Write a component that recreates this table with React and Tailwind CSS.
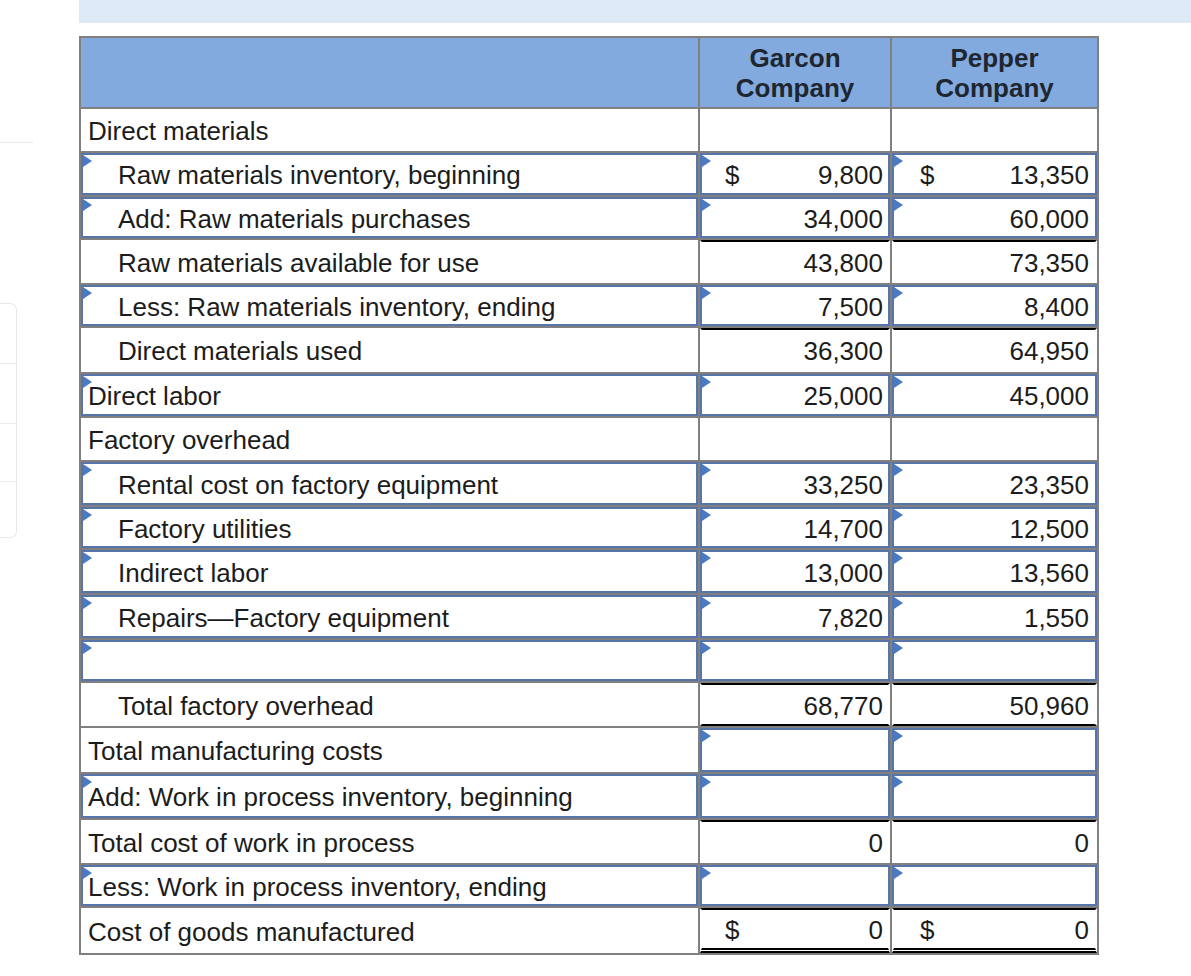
import React from 'react';

const rows = [
    { label: 'Direct materials' },
    { label: 'Raw materials inventory, beginning', indent: true, inp: true, g: '9,800', p: '13,350', dollar: true },
    { label: 'Add: Raw materials purchases', indent: true, inp: true, g: '34,000', p: '60,000' },
    { label: 'Raw materials available for use', indent: true, g: '43,800', p: '73,350', top: true },
    { label: 'Less: Raw materials inventory, ending', indent: true, inp: true, g: '7,500', p: '8,400' },
    { label: 'Direct materials used', indent: true, g: '36,300', p: '64,950', top: true },
    { label: 'Direct labor', inp: true, g: '25,000', p: '45,000' },
    { label: 'Factory overhead' },
    { label: 'Rental cost on factory equipment', indent: true, inp: true, g: '33,250', p: '23,350' },
    { label: 'Factory utilities', indent: true, inp: true, g: '14,700', p: '12,500' },
    { label: 'Indirect labor', indent: true, inp: true, g: '13,000', p: '13,560' },
    { label: 'Repairs\u2014Factory equipment', indent: true, inp: true, g: '7,820', p: '1,550' },
    { label: '', inp: true },
    { label: 'Total factory overhead', indent: true, g: '68,770', p: '50,960', top: true, bottom: true },
    { label: 'Total manufacturing costs', numInp: true },
    { label: 'Add: Work in process inventory, beginning', inp: true },
    { label: 'Total cost of work in process', g: '0', p: '0', top: true },
    { label: 'Less: Work in process inventory, ending', inp: true },
    { label: 'Cost of goods manufactured', g: '0', p: '0', dollar: true, top: true, dbl: true },
];

const Tri = () => (
    <span className="absolute left-0 top-0 h-0 w-0 border-y-[6px] border-l-[9px] border-y-transparent border-l-[#4a7ac4]" />
);

const Box = ({ inp, top, bottom, dbl, className, children }) => {
    let cls = 'relative flex h-full items-center border-2 pt-[2px] ' + (inp ? 'border-[#5775a9] ' : 'border-transparent ');
    if (top) cls += 'border-t-black ';
    if (bottom) cls += 'border-b-black ';
    if (dbl) cls += 'border-b-[5px] border-b-black [border-bottom-style:double] ';
    return (
        <div className="h-full bg-white">
            <div className={cls + className}>
                {inp && <Tri />}
                {children}
            </div>
        </div>
    );
};

const App = () => {
    return (
        <div className="flex min-h-screen bg-white font-['Liberation_Sans',Arial,sans-serif] text-[#1c1c1c]">
            {/* faint sidebar remnants */}
            <div className="w-[79px] shrink-0">
                <div className="mt-[142px] h-px w-[33px] bg-[#e9e9e9]" />
                <div className="mt-[160px] flex h-[235px] w-[17px] flex-col rounded-r-[7px] border border-l-0 border-[#e8e8e8]">
                    <div className="h-[60px] border-b border-[#ececec]" />
                    <div className="h-[60px] border-b border-[#ececec]" />
                    <div className="h-[58px] border-b border-[#ececec]" />
                    <div className="flex-1" />
                </div>
            </div>

            <div className="flex-1">
                <div className="h-[23px] bg-[#dde9f7]" />

                <div className="mt-[13px] grid w-[1020px] grid-cols-[617px_190px_205px] grid-rows-[69px_42px_42px_41px_43px_41px_44px_42px_42px_43px_41px_43px_43px_41px_43px_44px_44px_43px_41px_45px] gap-[2px] bg-[#808080] p-[2px] text-[26px] leading-none">
                    {/* Header */}
                    <div className="bg-[#83aadf]" />
                    <div className="flex flex-col items-center justify-center bg-[#83aadf] text-[26px] font-bold leading-[30px] text-[#1e2630]">
                        <span>Garcon</span>
                        <span>Company</span>
                    </div>
                    <div className="flex flex-col items-center justify-center bg-[#83aadf] text-[26px] font-bold leading-[30px] text-[#1e2630]">
                        <span>Pepper</span>
                        <span>Company</span>
                    </div>

                    {rows.map((r, i) => (
                        <React.Fragment key={i}>
                            <Box inp={r.inp} className={r.indent ? 'pl-[35px]' : 'pl-[5px]'}>
                                <span className="whitespace-nowrap">{r.label}</span>
                            </Box>
                            <Box inp={r.inp || r.numInp} top={r.top} bottom={r.bottom} dbl={r.dbl} className="justify-between pl-[23px] pr-[5px]">
                                <span>{r.dollar ? '$' : ''}</span>
                                <span>{r.g || ''}</span>
                            </Box>
                            <Box inp={r.inp || r.numInp} top={r.top} bottom={r.bottom} dbl={r.dbl} className="justify-between pl-[26px] pr-[6px]">
                                <span>{r.dollar ? '$' : ''}</span>
                                <span>{r.p || ''}</span>
                            </Box>
                        </React.Fragment>
                    ))}
                </div>
            </div>
        </div>
    );
};

export default App;
